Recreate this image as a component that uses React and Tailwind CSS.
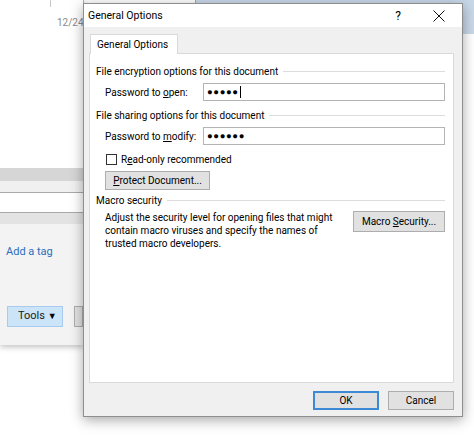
import React from "react";

function U({ children }) {
  return <span className="underline underline-offset-[1px]">{children}</span>;
}

function GroupHeading({ children }) {
  return (
    <div className="flex items-center gap-[5px] h-[15px] pl-[6px] pr-[8px]">
      <span className="whitespace-nowrap">{children}</span>
      <div className="flex-1 h-px bg-[#dcdcdc]" />
    </div>
  );
}

function PasswordRow({ label, dots, caret }) {
  return (
    <div className="flex items-center h-[18px] pl-[15px] pr-[8px]">
      <span className="w-[98px] whitespace-nowrap">{label}</span>
      <div className="flex-1 h-[18px] border border-[#b4b4b4] bg-white flex items-center pl-[3px]">
        <span className="text-[9.5px] tracking-[0.6px] leading-none">{"●".repeat(dots)}</span>
        {caret && <span className="w-px h-[12px] bg-black ml-[1px]" />}
      </div>
    </div>
  );
}

function WinButton({ children, className = "" }) {
  return (
    <button className={`h-[19px] bg-[#e1e1e1] border border-[#adadad] flex items-center justify-center ${className}`}>
      {children}
    </button>
  );
}

function BackWindow() {
  return (
    <div className="absolute left-0 top-0 w-[84px] h-[345px] flex flex-col bg-white border-r border-[#b0b0b0] shadow-[0_2px_6px_rgba(0,0,0,0.25)]">
      <div className="h-[168px] relative">
        <div className="absolute left-[50px] top-0 w-px h-[7px] bg-[#c8c8c8]" />
        <span className="absolute left-[57px] top-[15px] text-[10px] text-[#8a8a8a]">12/24</span>
      </div>
      <div className="h-[13px] bg-[#d6d6d6]" />
      <div className="h-[12px] bg-[#f0f0f0] border-b border-[#a9a9a9]" />
      <div className="h-[20px] bg-white border-b border-[#a9a9a9]" />
      <div className="h-[11px] bg-[#e3e3e3]" />
      <div className="flex-1 bg-[#f3f3f3] flex flex-col pl-[6px]">
        <span className="mt-[20px] text-[11px] text-[#2a6ebb]">Add a tag</span>
        <div className="mt-[45px] flex items-center gap-[11px]">
          <div className="ml-[1px] w-[60px] h-[21px] bg-[#cce4f7] border border-[#a6cbee] flex items-center pl-[10px] pr-[5px] justify-between">
            <span className="text-[11px] text-[#1a1a1a]">Tools</span>
            <span className="text-[9px] text-black leading-none">▼</span>
          </div>
          <div className="w-[10px] h-[21px] bg-[#e1e1e1] border border-[#adadad]" />
        </div>
      </div>
    </div>
  );
}

export default function App() {
  return (
    <div className="relative w-[474px] h-[437px] overflow-hidden bg-white font-['Roboto',sans-serif] text-[10px] text-black">
      <div className="absolute left-[195px] top-0 w-[279px] h-[34px] bg-[#c9d8e9] border-l border-[#9aa8b6]" />
      <BackWindow />

      <div className="absolute left-[83px] top-[3px] w-[380px] h-[414px] flex flex-col border border-[#8e8e8e] bg-[#f0f0f0] shadow-[0_3px_12px_rgba(0,0,0,0.35)]">
        {/* Title bar */}
        <div className="h-[23px] bg-white flex items-center">
          <span className="pl-[4px] text-[10.5px] flex-1">General Options</span>
          <span className="w-[36px] text-center text-[12px]">?</span>
          <span className="w-[46px] flex justify-center">
            <svg width="12" height="12" viewBox="0 0 12 12">
              <path d="M0.5 0.5 L11.5 11.5 M11.5 0.5 L0.5 11.5" stroke="#111" strokeWidth="1" />
            </svg>
          </span>
        </div>

        {/* Body */}
        <div className="flex-1 flex flex-col pl-[5px] pr-[8px] pt-[7px] pb-[6px]">
          <div className="flex">
            <div className="ml-[1px] w-[88px] h-[20px] bg-white border border-b-0 border-[#d9d9d9] flex items-center pl-[6px] -mb-px relative z-10">
              General Options
            </div>
          </div>
          <div className="h-[330px] bg-white border border-[#d9d9d9] flex flex-col pt-[10px]">
            <GroupHeading>File encryption options for this document</GroupHeading>
            <div className="mt-[4px]">
              <PasswordRow label={<>Password to <U>o</U>pen:</>} dots={5} caret />
            </div>
            <div className="mt-[7px]">
              <GroupHeading>File sharing options for this document</GroupHeading>
            </div>
            <div className="mt-[4px]">
              <PasswordRow label={<>Password to <U>m</U>odify:</>} dots={6} />
            </div>
            <div className="mt-[7px] h-[15px] flex items-center pl-[16px] gap-[4px]">
              <div className="w-[11px] h-[11px] border border-[#333] bg-white" />
              <span>R<U>e</U>ad-only recommended</span>
            </div>
            <div className="mt-[4px] pl-[15px] flex">
              <WinButton className="w-[105px] h-[18px]"><span><U>P</U>rotect Document...</span></WinButton>
            </div>
            <div className="mt-[3px]">
              <GroupHeading>Macro security</GroupHeading>
            </div>
            <div className="mt-[3px] flex pl-[15px] pr-[8px] items-start">
              <p className="w-[235px] leading-[13px]">
                Adjust the security level for opening files that might contain macro viruses and specify the names of trusted macro developers.
              </p>
              <div className="flex-1" />
              <WinButton className="w-[92px] h-[21px]"><span>Macro <U>S</U>ecurity...</span></WinButton>
            </div>
          </div>
          <div className="mt-[8px] flex justify-end gap-[9px]">
            <button className="w-[66px] h-[19px] bg-[#e1e1e1] border-2 border-[#3c8ad6] flex items-center justify-center">OK</button>
            <WinButton className="w-[66px]">Cancel</WinButton>
          </div>
        </div>
      </div>
    </div>
  );
}
